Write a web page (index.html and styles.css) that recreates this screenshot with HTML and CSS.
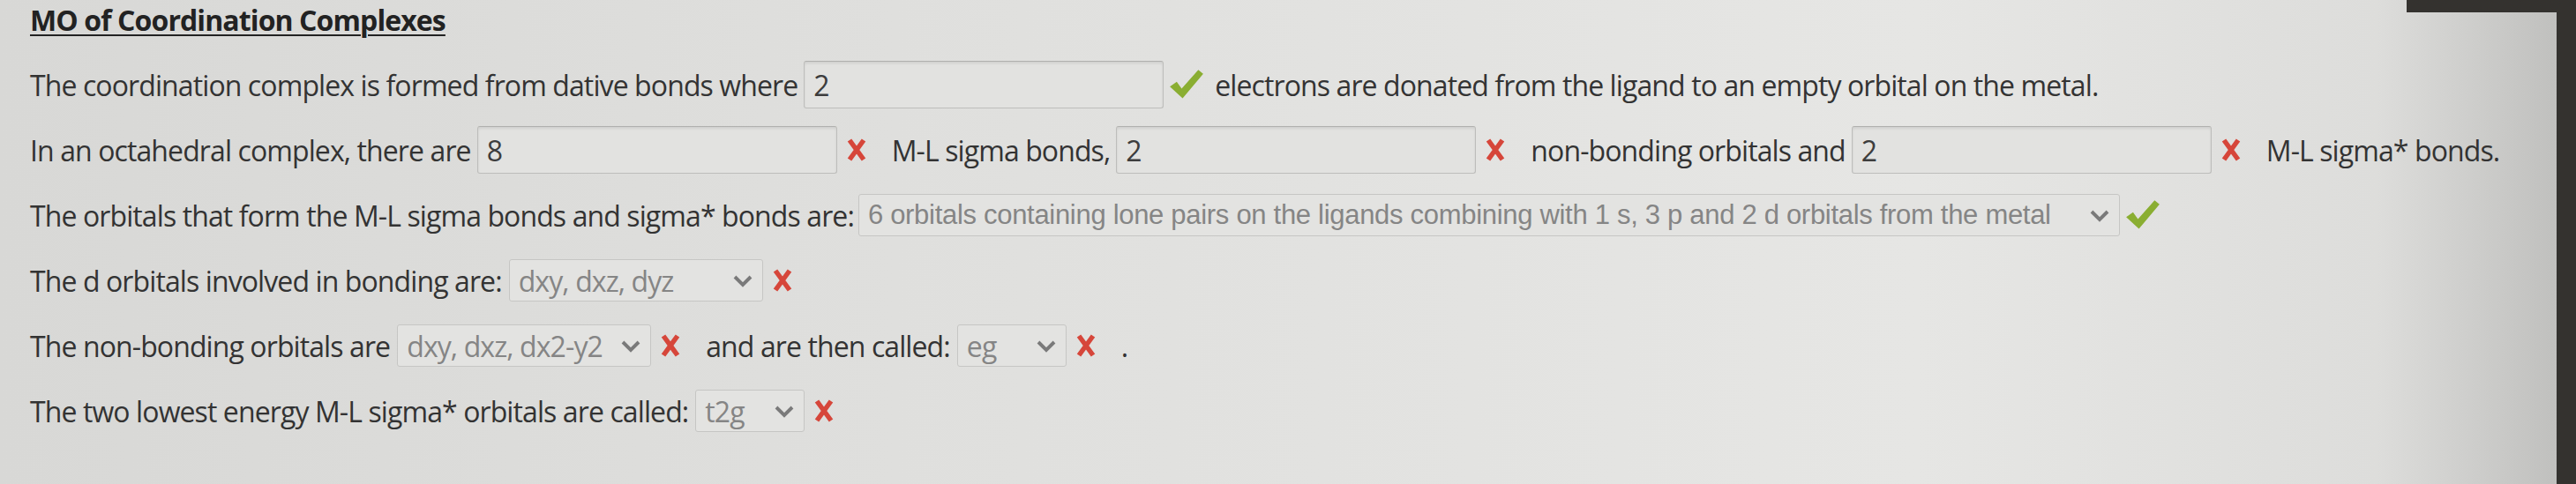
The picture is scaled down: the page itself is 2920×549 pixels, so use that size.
FILE: index.html
```html
<!DOCTYPE html>
<html lang="en">

<head>
    <meta charset="UTF-8">
    <meta name="viewport" content="width=device-width, initial-scale=1.0">
    <title>MO of Coordination Complexes</title>
    <link rel="stylesheet" href="styles.css">
</head>

<body>
    <div class="screen">
        <div class="page">
            <h3 class="title">MO of Coordination Complexes</h3>

            <div class="row">
                <span>The coordination complex is formed from dative bonds where</span>
                <input class="blank" type="text" value="2">
                <svg class="mark check" viewBox="0 0 36 30"><path d="M1 17 L8 12 L13 19 L30 0 L35 4 L14 29 Z"/></svg>
                <span>electrons are donated from the ligand to an empty orbital on the metal.</span>
            </div>

            <div class="row">
                <span>In an octahedral complex, there are</span>
                <input class="blank" type="text" value="8">
                <svg class="mark cross" viewBox="0 0 24 28"><path d="M4 3 L20 25 M20 3 L4 25"/></svg>
                <span>M-L sigma bonds,</span>
                <input class="blank" type="text" value="2">
                <svg class="mark cross" viewBox="0 0 24 28"><path d="M4 3 L20 25 M20 3 L4 25"/></svg>
                <span>non-bonding orbitals and</span>
                <input class="blank" type="text" value="2">
                <svg class="mark cross" viewBox="0 0 24 28"><path d="M4 3 L20 25 M20 3 L4 25"/></svg>
                <span>M-L sigma* bonds.</span>
            </div>

            <div class="row">
                <span>The orbitals that form the M-L sigma bonds and sigma* bonds are:</span>
                <span class="dropdown wide">
                    <span class="value">6 orbitals containing lone pairs on the ligands combining with 1 s, 3 p and 2 d orbitals from the metal</span>
                    <svg class="chevron" viewBox="0 0 16 10"><path d="M2 2 L8 8 L14 2"/></svg>
                </span>
                <svg class="mark check" viewBox="0 0 36 30"><path d="M1 17 L8 12 L13 19 L30 0 L35 4 L14 29 Z"/></svg>
            </div>

            <div class="row">
                <span>The d orbitals involved in bonding are:</span>
                <span class="dropdown mid">
                    <span class="value">dxy, dxz, dyz</span>
                    <svg class="chevron" viewBox="0 0 16 10"><path d="M2 2 L8 8 L14 2"/></svg>
                </span>
                <svg class="mark cross" viewBox="0 0 24 28"><path d="M4 3 L20 25 M20 3 L4 25"/></svg>
            </div>

            <div class="row">
                <span>The non-bonding orbitals are</span>
                <span class="dropdown mid">
                    <span class="value">dxy, dxz, dx2-y2</span>
                    <svg class="chevron" viewBox="0 0 16 10"><path d="M2 2 L8 8 L14 2"/></svg>
                </span>
                <svg class="mark cross" viewBox="0 0 24 28"><path d="M4 3 L20 25 M20 3 L4 25"/></svg>
                <span>and are then called:</span>
                <span class="dropdown small">
                    <span class="value">eg</span>
                    <svg class="chevron" viewBox="0 0 16 10"><path d="M2 2 L8 8 L14 2"/></svg>
                </span>
                <svg class="mark cross" viewBox="0 0 24 28"><path d="M4 3 L20 25 M20 3 L4 25"/></svg>
                <span>.</span>
            </div>

            <div class="row">
                <span>The two lowest energy M-L sigma* orbitals are called:</span>
                <span class="dropdown small">
                    <span class="value">t2g</span>
                    <svg class="chevron" viewBox="0 0 16 10"><path d="M2 2 L8 8 L14 2"/></svg>
                </span>
                <svg class="mark cross" viewBox="0 0 24 28"><path d="M4 3 L20 25 M20 3 L4 25"/></svg>
            </div>
        </div>
        <div class="bezel"></div>
    </div>
</body>

</html>
```

FILE: styles.css
```css
html,
body {
    margin: 0;
    padding: 0;
    height: 100%;
}

body {
    font-family: 'Open Sans', 'Noto Sans', sans-serif;
    background: #3a3836;
    color: #333;
}

.screen {
    display: flex;
    height: 549px;
}

.page {
    flex: 1;
    padding: 0 0 0 34px;
    background:
        linear-gradient(#34322f, #34322f) right top / 170px 14px no-repeat,
        linear-gradient(90deg, #d8d8d6 0%, #e0e0de 40%, #e6e6e4 75%, #dddddb 93%, #c0c0be 100%);
    overflow: hidden;
}

.bezel {
    width: 22px;
    background: #34322f;
}

.title {
    margin: 4px 0 26px;
    font-size: 32px;
    line-height: 38px;
    font-weight: 700;
    letter-spacing: -0.9px;
    color: #222;
    text-decoration: underline;
    text-decoration-thickness: 2px;
    text-underline-offset: 4px;
}

.row {
    display: flex;
    align-items: center;
    height: 56px;
    margin-bottom: 18px;
    font-size: 32px;
    letter-spacing: -0.9px;
    white-space: nowrap;
}

.blank {
    width: 408px;
    height: 54px;
    box-sizing: border-box;
    margin-left: 7px;
    padding: 0 10px;
    border: 1px solid #bdbdbb;
    border-top-color: #b0b0ae;
    border-radius: 3px;
    background: #e2e2e0;
    box-shadow: inset 0 2px 3px rgba(0, 0, 0, 0.08);
    font-family: 'Open Sans', sans-serif;
    font-size: 32px;
    letter-spacing: -0.9px;
    color: #3d3d3d;
}

.dropdown {
    display: flex;
    align-items: center;
    justify-content: space-between;
    height: 48px;
    box-sizing: border-box;
    margin-left: 8px;
    padding: 0 10px;
    border: 1px solid #c6c6c4;
    border-radius: 3px;
    background: #e3e3e1;
    color: #858585;
}

.dropdown.wide {
    width: 1430px;
    margin-left: 5px;
    font-family: 'Liberation Sans', Arial, sans-serif;
    font-size: 31px;
    letter-spacing: -0.3px;
}

.dropdown.mid {
    width: 288px;
}

.dropdown.small {
    width: 124px;
}

.chevron {
    width: 24px;
    height: 15px;
    flex: none;
    fill: none;
    stroke: #7a7a7a;
    stroke-width: 2.6;
}

.mark {
    flex: none;
}

.check {
    width: 40px;
    height: 34px;
    margin: 0 12px 0 6px;
    fill: #8aae32;
}

.cross {
    width: 24px;
    height: 28px;
    margin: 0 28px 0 10px;
    fill: none;
    stroke: #d6463a;
    stroke-width: 5.5;
}
```
